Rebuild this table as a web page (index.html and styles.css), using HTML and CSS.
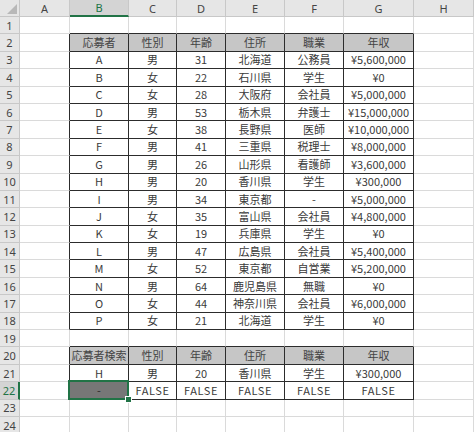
FILE: index.html
```html
<!DOCTYPE html>
<html lang="ja">
<head>
<meta charset="utf-8">
<link rel="stylesheet" href="styles.css">
</head>
<body>
<div class="sheet">
  <div class="row hdr">
    <div class="c corner"></div><div class="c ch">A</div><div class="c ch sel">B</div><div class="c ch">C</div><div class="c ch">D</div><div class="c ch">E</div><div class="c ch">F</div><div class="c ch">G</div><div class="c ch">H</div>
  </div>
  <div class="row"><div class="c rh">1</div><div class="c"></div><div class="c tt"></div><div class="c tt"></div><div class="c tt"></div><div class="c tt"></div><div class="c tt"></div><div class="c tt"></div><div class="c"></div></div>
  <div class="row"><div class="c rh">2</div><div class="c tl"></div><div class="c t th">応募者</div><div class="c t th">性別</div><div class="c t th">年齢</div><div class="c t th">住所</div><div class="c t th">職業</div><div class="c t th">年収</div><div class="c"></div></div>
  <div class="row"><div class="c rh">3</div><div class="c tl"></div><div class="c t">A</div><div class="c t">男</div><div class="c t">31</div><div class="c t">北海道</div><div class="c t">公務員</div><div class="c t">¥5,600,000</div><div class="c"></div></div>
  <div class="row"><div class="c rh">4</div><div class="c tl"></div><div class="c t">B</div><div class="c t">女</div><div class="c t">22</div><div class="c t">石川県</div><div class="c t">学生</div><div class="c t">¥0</div><div class="c"></div></div>
  <div class="row"><div class="c rh">5</div><div class="c tl"></div><div class="c t">C</div><div class="c t">女</div><div class="c t">28</div><div class="c t">大阪府</div><div class="c t">会社員</div><div class="c t">¥5,000,000</div><div class="c"></div></div>
  <div class="row"><div class="c rh">6</div><div class="c tl"></div><div class="c t">D</div><div class="c t">男</div><div class="c t">53</div><div class="c t">栃木県</div><div class="c t">弁護士</div><div class="c t">¥15,000,000</div><div class="c"></div></div>
  <div class="row"><div class="c rh">7</div><div class="c tl"></div><div class="c t">E</div><div class="c t">女</div><div class="c t">38</div><div class="c t">長野県</div><div class="c t">医師</div><div class="c t">¥10,000,000</div><div class="c"></div></div>
  <div class="row"><div class="c rh">8</div><div class="c tl"></div><div class="c t">F</div><div class="c t">男</div><div class="c t">41</div><div class="c t">三重県</div><div class="c t">税理士</div><div class="c t">¥8,000,000</div><div class="c"></div></div>
  <div class="row"><div class="c rh">9</div><div class="c tl"></div><div class="c t">G</div><div class="c t">男</div><div class="c t">26</div><div class="c t">山形県</div><div class="c t">看護師</div><div class="c t">¥3,600,000</div><div class="c"></div></div>
  <div class="row"><div class="c rh">10</div><div class="c tl"></div><div class="c t">H</div><div class="c t">男</div><div class="c t">20</div><div class="c t">香川県</div><div class="c t">学生</div><div class="c t">¥300,000</div><div class="c"></div></div>
  <div class="row"><div class="c rh">11</div><div class="c tl"></div><div class="c t">I</div><div class="c t">男</div><div class="c t">34</div><div class="c t">東京都</div><div class="c t">-</div><div class="c t">¥5,000,000</div><div class="c"></div></div>
  <div class="row"><div class="c rh">12</div><div class="c tl"></div><div class="c t">J</div><div class="c t">女</div><div class="c t">35</div><div class="c t">富山県</div><div class="c t">会社員</div><div class="c t">¥4,800,000</div><div class="c"></div></div>
  <div class="row"><div class="c rh">13</div><div class="c tl"></div><div class="c t">K</div><div class="c t">女</div><div class="c t">19</div><div class="c t">兵庫県</div><div class="c t">学生</div><div class="c t">¥0</div><div class="c"></div></div>
  <div class="row"><div class="c rh">14</div><div class="c tl"></div><div class="c t">L</div><div class="c t">男</div><div class="c t">47</div><div class="c t">広島県</div><div class="c t">会社員</div><div class="c t">¥5,400,000</div><div class="c"></div></div>
  <div class="row"><div class="c rh">15</div><div class="c tl"></div><div class="c t">M</div><div class="c t">女</div><div class="c t">52</div><div class="c t">東京都</div><div class="c t">自営業</div><div class="c t">¥5,200,000</div><div class="c"></div></div>
  <div class="row"><div class="c rh">16</div><div class="c tl"></div><div class="c t">N</div><div class="c t">男</div><div class="c t">64</div><div class="c t">鹿児島県</div><div class="c t">無職</div><div class="c t">¥0</div><div class="c"></div></div>
  <div class="row"><div class="c rh">17</div><div class="c tl"></div><div class="c t">O</div><div class="c t">女</div><div class="c t">44</div><div class="c t">神奈川県</div><div class="c t">会社員</div><div class="c t">¥6,000,000</div><div class="c"></div></div>
  <div class="row"><div class="c rh">18</div><div class="c tl"></div><div class="c t">P</div><div class="c t">女</div><div class="c t">21</div><div class="c t">北海道</div><div class="c t">学生</div><div class="c t">¥0</div><div class="c"></div></div>
  <div class="row"><div class="c rh">19</div><div class="c"></div><div class="c tt"></div><div class="c tt"></div><div class="c tt"></div><div class="c tt"></div><div class="c tt"></div><div class="c tt"></div><div class="c"></div></div>
  <div class="row"><div class="c rh">20</div><div class="c tl"></div><div class="c t th">応募者検索</div><div class="c t th">性別</div><div class="c t th">年齢</div><div class="c t th">住所</div><div class="c t th">職業</div><div class="c t th">年収</div><div class="c"></div></div>
  <div class="row"><div class="c rh">21</div><div class="c tl"></div><div class="c t">H</div><div class="c t">男</div><div class="c t">20</div><div class="c t">香川県</div><div class="c t">学生</div><div class="c t">¥300,000</div><div class="c"></div></div>
  <div class="row"><div class="c rh rsel">22</div><div class="c tl"></div><div class="c t active">-</div><div class="c t fl">FALSE</div><div class="c t fl">FALSE</div><div class="c t fl">FALSE</div><div class="c t fl">FALSE</div><div class="c t fl">FALSE</div><div class="c"></div></div>
  <div class="row"><div class="c rh">23</div><div class="c"></div><div class="c"></div><div class="c"></div><div class="c"></div><div class="c"></div><div class="c"></div><div class="c"></div><div class="c"></div></div>
  <div class="row"><div class="c rh">24</div><div class="c"></div><div class="c"></div><div class="c"></div><div class="c"></div><div class="c"></div><div class="c"></div><div class="c"></div><div class="c"></div></div>
</div>
</body>
</html>
```

FILE: styles.css
```css
html, body {
  margin: 0;
  padding: 0;
  background: #ffffff;
}

body {
  font-family: "Noto Sans CJK JP", "Noto Sans", sans-serif;
}

.sheet {
  width: 474px;
  height: 432px;
  overflow: hidden;
}

.row {
  display: grid;
  grid-template-columns: 20px 50px 59px 48px 49px 59px 59px 70px 60px;
  height: 17.4px;
}

.row.hdr {
  height: 17px;
}

.c {
  box-sizing: border-box;
  border-right: 1px solid #dadada;
  border-bottom: 1px solid #dadada;
  display: flex;
  align-items: center;
  justify-content: center;
  font-size: 11px;
  line-height: 1;
  color: #3a3a3a;
  white-space: nowrap;
  overflow: hidden;
}

.corner {
  background: #e6e6e6;
  border-right-color: #c6c6c6;
  border-bottom-color: #c6c6c6;
  position: relative;
}

.corner::after {
  content: "";
  position: absolute;
  right: 2px;
  bottom: 2px;
  width: 0;
  height: 0;
  border-left: 10px solid transparent;
  border-bottom: 10px solid #b8b8b8;
}

.ch {
  background: #e6e6e6;
  border-right-color: #c8c8c8;
  border-bottom-color: #c8c8c8;
  color: #444444;
  font-family: "Noto Sans", sans-serif;
  font-size: 11px;
}

.ch.sel {
  background: #d4d4d4;
  color: #217346;
  border-bottom: 2px solid #217346;
}

.rh {
  background: #e6e6e6;
  border-right-color: #c8c8c8;
  border-bottom-color: #c8c8c8;
  color: #444444;
  font-family: "Noto Sans", sans-serif;
  font-size: 11px;
}

.rh.rsel {
  background: #d4d4d4;
  color: #217346;
  border-right: 2px solid #217346;
}

.tl {
  border-right-color: #2c2c2c;
}

.tt {
  border-bottom-color: #2c2c2c;
}

.t {
  border-right-color: #2c2c2c;
  border-bottom-color: #2c2c2c;
}

.th {
  background: #c6c6c6;
  color: #444444;
}

.fl {
  letter-spacing: 0.6px;
}

.active {
  background: #777777;
  position: relative;
  overflow: visible;
  color: #2a2a2a;
}

.active::after {
  content: "";
  position: absolute;
  left: -2px;
  top: -2px;
  right: -1px;
  bottom: -1px;
  border: 2px solid #217346;
}

.active::before {
  content: "";
  position: absolute;
  right: -4px;
  bottom: -4px;
  width: 5px;
  height: 5px;
  background: #217346;
  border: 1px solid #ffffff;
  z-index: 2;
}
```
